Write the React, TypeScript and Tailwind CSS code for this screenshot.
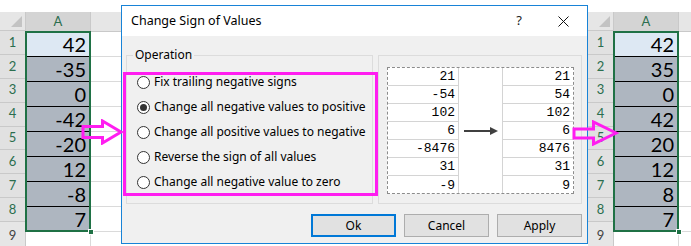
import React from "react";

const BEFORE = ["42", "-35", "0", "-42", "-20", "12", "-8", "7"];
const AFTER = ["42", "35", "0", "42", "20", "12", "8", "7"];
const SAMPLE_IN = ["21", "-54", "102", "6", "-8476", "31", "-9"];
const SAMPLE_OUT = ["21", "54", "102", "6", "8476", "31", "9"];

const OPTIONS = [
  "Fix trailing negative signs",
  "Change all negative values to positive",
  "Change all positive values to negative",
  "Reverse the sign of all values",
  "Change all negative value to zero",
];

type SheetProps = {
  values: string[];
  colBWidth: string;
};

const Sheet = ({ values, colBWidth }: SheetProps) => (
  <div className="flex shrink-0 bg-white pt-[12px] font-['Lato',sans-serif]">
    {/* row numbers */}
    <div className="flex w-[26px] flex-col">
      <div className="relative h-[20px] border-b border-r border-[#c9c9c9] bg-[#e6e6e6]">
        <div className="absolute bottom-[3px] right-[3px] h-0 w-0 border-b-[11px] border-l-[11px] border-b-[#c3c3c3] border-l-transparent" />
      </div>
      {values.map((_, i) => (
        <div
          key={i}
          className="flex h-[25px] items-center justify-center border-b border-r border-[#c9c9c9] bg-[#e1e1e1] text-[13px] text-[#2b6e4e]"
        >
          {i + 1}
        </div>
      ))}
      <div className="flex h-[25px] justify-center border-r border-[#c9c9c9] bg-[#e6e6e6] pt-[4px] text-[13px] text-[#444]">
        9
      </div>
    </div>
    {/* column A */}
    <div className="flex w-[65px] flex-col">
      <div className="flex h-[20px] items-center justify-center border-b border-r border-[#c9c9c9] bg-[#d4d4d4] text-[13px] text-[#2b6e4e]">
        A
      </div>
      <div className="relative">
        {values.map((v, i) => (
          <div
            key={i}
            className={`flex h-[25px] items-center justify-end border-b border-black pr-[5px] text-[20px] leading-none text-black ${
              i === 0 ? "bg-[#dde8f3]" : "bg-[#aeb6c0]"
            }`}
          >
            {v}
          </div>
        ))}
        <div className="absolute -left-px -top-px bottom-0 right-0 border-2 border-[#1f7145]" />
        <div className="absolute -bottom-[3px] -right-[3px] h-[6px] w-[6px] border border-white bg-[#1f7145]" />
      </div>
      <div className="h-[25px] border-r border-[#dadada]" />
    </div>
    {/* column B */}
    <div className={`flex flex-col ${colBWidth}`}>
      <div className="h-[20px] border-b border-[#c9c9c9] bg-[#e6e6e6]" />
      {values.map((_, i) => (
        <div key={i} className="h-[25px] border-b border-[#dadada]" />
      ))}
    </div>
  </div>
);

const Radio = ({ checked }: { checked: boolean }) => (
  <span className="flex h-[13px] w-[13px] shrink-0 items-center justify-center rounded-full border border-[#333] bg-white">
    {checked ? <span className="h-[7px] w-[7px] rounded-full bg-[#333]" /> : null}
  </span>
);

const SampleColumn = ({ values, className }: { values: string[]; className: string }) => (
  <div className={`flex flex-col ${className}`}>
    {values.map((v, i) => (
      <div
        key={i}
        className={`flex items-center justify-end pr-[3px] ${
          i === values.length - 1 ? "flex-1" : "h-[18px] border-b border-[#d4d4d4]"
        }`}
      >
        {v}
      </div>
    ))}
  </div>
);

const Button = ({ label, primary }: { label: string; primary?: boolean }) => (
  <button
    className={`flex h-[23px] w-[85px] items-center justify-center bg-[#e1e1e1] text-[12px] text-black ${
      primary ? "border-2 border-[#0078d7]" : "border border-[#adadad]"
    }`}
  >
    {label}
  </button>
);

const Dialog = () => (
  <div className="relative mt-[5px] flex h-[239px] w-[467px] shrink-0 flex-col border border-[#1883d7] bg-[#f0f0f0] font-['Noto_Sans',sans-serif] text-[12px] text-black">
    <div className="flex h-[30px] items-center bg-white pl-[9px] pr-[18px]">
      <span className="text-[12.5px]">Change Sign of Values</span>
      <span className="ml-auto mr-[36px] text-[13px] text-[#222]">?</span>
      <svg width="11" height="11" viewBox="0 0 11 11">
        <path d="M0.5 0.5 L10.5 10.5 M10.5 0.5 L0.5 10.5" stroke="#111" strokeWidth="1" />
      </svg>
    </div>
    <div className="flex flex-1 flex-col px-[4px] pt-[19px]">
      <div className="flex gap-[5px]">
        <div className="relative h-[149px] w-[247px] border border-[#dcdcdc]">
          <span className="absolute -top-[10px] left-[6px] bg-[#f0f0f0] px-[2px] leading-[18px]">Operation</span>
          <div className="flex flex-col gap-[7px] pl-[10px] pt-[17px]">
            {OPTIONS.map((o, i) => (
              <div key={o} className="flex h-[18px] items-center gap-[4px]">
                <Radio checked={i === 1} />
                <span>{o}</span>
              </div>
            ))}
          </div>
        </div>
        <div className="h-[149px] w-[204px] border border-[#dcdcdc] pl-[8px] pt-[11px]">
          <div className="flex h-[127px] w-[187px] border border-dashed border-[#8c8c8c] bg-white font-['Liberation_Mono',monospace] text-[13px]">
            <SampleColumn values={SAMPLE_IN} className="w-[71px] border-r border-[#d4d4d4]" />
            <div className="flex w-[43px] items-center justify-center">
              <svg width="36" height="10" viewBox="0 0 36 10">
                <path d="M1 5 H28" stroke="#404040" strokeWidth="2" />
                <path d="M27 1 L35 5 L27 9 Z" fill="#404040" />
              </svg>
            </div>
            <SampleColumn values={SAMPLE_OUT} className="flex-1 border-l border-[#d4d4d4]" />
          </div>
        </div>
      </div>
      <div className="mt-[10px] flex justify-end gap-[8px] pr-[1px]">
        <Button label="Ok" primary />
        <Button label="Cancel" />
        <Button label="Apply" />
      </div>
    </div>
    {/* highlight annotation */}
    <div className="pointer-events-none absolute left-[1px] top-[66px] h-[124px] w-[255px] border-[3px] border-[#ff1df0]" />
  </div>
);

const OutlineArrow = ({ className, d }: { className: string; d: string }) => (
  <svg className={`absolute ${className}`} width="48" height="26" viewBox="0 0 48 26">
    <path d={d} fill="none" stroke="#ff1df0" strokeWidth="3" strokeLinejoin="miter" />
  </svg>
);

export default function App() {
  return (
    <div className="relative flex h-[246px] w-[691px] overflow-hidden bg-white">
      <Sheet values={BEFORE} colBWidth="w-[30px]" />
      <Dialog />
      <Sheet values={AFTER} colBWidth="w-[12px]" />
      <OutlineArrow className="left-[81px] top-[119px]" d="M2 7.5 H21.5 V2 L40 13 L21.5 24 V18.5 H2 Z" />
      <OutlineArrow className="left-[572px] top-[120px]" d="M2 9 H21.5 V2 L44 13 L21.5 24 V18 H2 Z" />
    </div>
  );
}
